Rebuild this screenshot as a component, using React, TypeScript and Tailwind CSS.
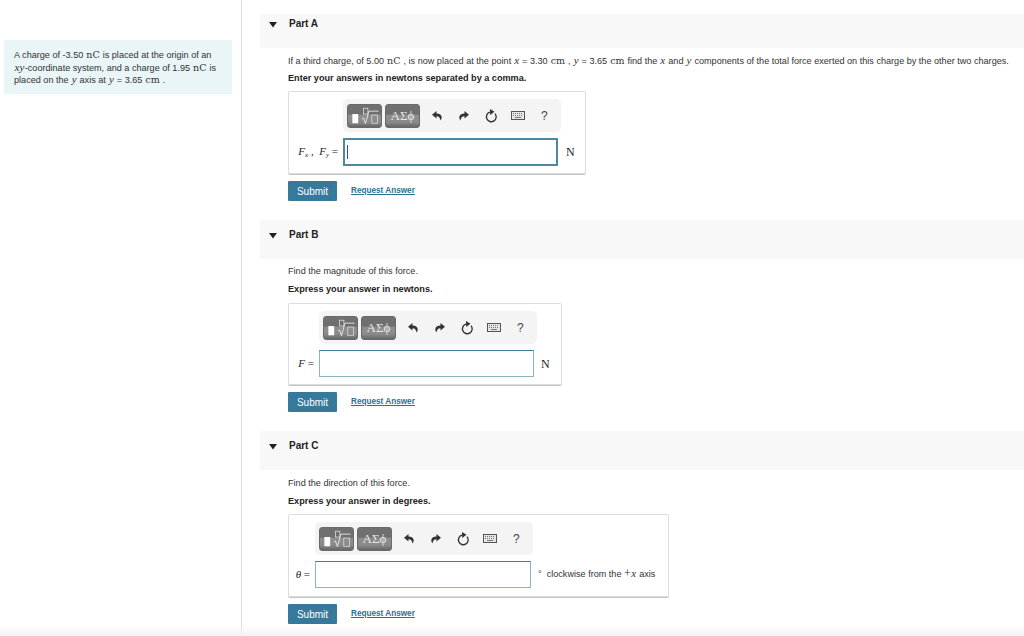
import type { ReactNode } from "react";

const serif = "font-['Liberation_Serif',serif]";
const mathFont = "font-['DejaVu_Serif',serif]";

function M({ children }: { children: ReactNode }) {
  return <span className={`${serif} italic text-[11px] px-[0.5px]`}>{children}</span>;
}

function U({ children }: { children: ReactNode }) {
  return <span className={`${mathFont} text-[9.500px] px-[0.5px]`}>{children}</span>;
}

function TemplateIcon() {
  return (
    <svg width="34" height="22" viewBox="0 0 34 22" fill="none">
      <rect x="4.500" y="9" width="6" height="9.500" fill="#fff" />
      <rect x="16" y="3" width="4.500" height="6" stroke="#ddd" strokeWidth="0.8" />
      <path d="M14.500 14l1.500-1 2 6 3.500-13h10" stroke="#eee" strokeWidth="0.9" />
      <rect x="24.500" y="10" width="6" height="8.500" stroke="#ddd" strokeWidth="0.8" />
    </svg>
  );
}

function Toolbar() {
  const btn =
    "flex h-[24px] w-[35px] items-center justify-center rounded-[3px] border border-[#6a6a6a] bg-[linear-gradient(#707070_0%,#6f6f6f_42%,#8e8e8e_46%,#8a8a8a_78%,#666_100%)]";
  return (
    <div className="flex h-[33px] w-[218px] items-center rounded-[5px] bg-[#f4f4f4] pl-[4px] text-[#333]">
      <div className={btn}>
        <TemplateIcon />
      </div>
      <div className={`${btn} ml-[3px] ${serif} text-[13px] text-[#e8e8e8]`}>ΑΣϕ</div>
      <svg className="ml-[11px]" width="12" height="12" viewBox="0 0 12 12" fill="#333">
        <path d="M5.500 1L1 4.800l4.500 3.800V6.200c2 0 3.400.8 4 4.300 1-1.200 1.400-2.800 1.100-4-.4-2-2.500-3-5.100-3z" />
      </svg>
      <svg className="ml-[15px]" width="12" height="12" viewBox="0 0 12 12" fill="#333">
        <path d="M6.500 1L11 4.800 6.500 8.600V6.200c-2 0-3.400.8-4 4.300-1-1.200-1.400-2.800-1.100-4 .4-2 2.500-3 5.100-3z" />
      </svg>
      <svg className="ml-[15px]" width="13" height="14" viewBox="0 0 13 14" fill="none">
        <path d="M10 4.600A4.900 4.900 0 1 1 5 3.100" stroke="#333" strokeWidth="1.400" />
        <path d="M5 0l4.500 2.800L5.200 6z" fill="#333" />
      </svg>
      <svg className="ml-[13px]" width="14" height="9" viewBox="0 0 14 9" fill="none">
        <rect x="0.500" y="0.500" width="13" height="8" fill="#e6e6e6" stroke="#555" />
        <path d="M2 2.500h10M2 4.500h10" stroke="#777" strokeDasharray="1 1" />
        <path d="M4 6.500h6" stroke="#777" />
      </svg>
      <span className="ml-[16px] text-[12px] text-[#444]">?</span>
    </div>
  );
}

type PartProps = {
  name: string;
  headerH: string;
  headerPt: string;
  text: ReactNode;
  bold: string;
  boxW: string;
  boxH: string;
  labelW: string;
  label: ReactNode;
  inputW: string;
  active?: boolean;
  unit: ReactNode;
  gap: string;
};

function Part({ name, headerH, headerPt, text, bold, boxW, boxH, labelW, label, inputW, active, unit, gap }: PartProps) {
  return (
    <section>
      <div className={`flex ${headerH} ${headerPt} bg-[#f8f8f8]`}>
        <svg className="ml-[9px] mt-[4px]" width="8" height="6" viewBox="0 0 8 6" fill="#222">
          <path d="M0 0h8L4 5.500z" />
        </svg>
        <h2 className="ml-[12px] text-[10px] font-bold leading-[11px] text-[#222]">{name}</h2>
      </div>
      <div className={`pl-[28px] ${gap}`}>
        <p className="h-[18px] whitespace-nowrap text-[9.100px] leading-[14px] text-[#333]">{text}</p>
        <p className="text-[9.150px] font-bold leading-[14px] text-[#222]">{bold}</p>
        <div className={`flex ${boxH} ${boxW} rounded-[2px] border border-[#dcdcdc] shadow-[0_1px_0_#c4c4c4]`}>
          <div className={`${labelW} shrink-0 whitespace-nowrap pr-[5px] pt-[51px] text-right ${serif} text-[11px] italic text-[#222]`}>
            {label}
          </div>
          <div className="pt-[7px]">
            <Toolbar />
            <div
              className={`mt-[6px] flex ${inputW} items-center bg-white ${
                active ? "h-[28px] border-2 border-[#4f88a3]" : "h-[27px] border border-[#8fb3c4] border-t-[#3b7a99]"
              }`}
            >
              {active && <span className="ml-[2px] h-[14px] w-px bg-[#2b50c8]" />}
            </div>
          </div>
          {unit}
        </div>
        <div className="mt-[7px] flex items-center">
          <button className="h-[20px] w-[49px] rounded-[1px] bg-[#36799b] text-[10px] text-white">Submit</button>
          <a className="ml-[14px] text-[8.200px] font-bold text-[#2c7193] underline">Request Answer</a>
        </div>
      </div>
    </section>
  );
}

export default function App() {
  return (
    <div className="relative flex h-[636px] w-[1024px] overflow-hidden bg-white font-['Liberation_Sans',sans-serif]">
      <aside className="h-full w-[242px] shrink-0 border-r border-[#dcdcdc] pl-[4px] pt-[40px]">
        <div className="h-[54px] w-[228px] bg-[#e9f5f7] px-[10px] pt-[9px] text-[9.100px] leading-[11.500px] text-[#333]">
          <p className="whitespace-nowrap">
            A charge of -3.50 <U>nC</U> is placed at the origin of an
          </p>
          <p className="whitespace-nowrap">
            <M>xy</M>-coordinate system, and a charge of 1.95 <U>nC</U> is
          </p>
          <p className="whitespace-nowrap">
            placed on the <M>y</M> axis at <M>y</M> = 3.65 <U>cm</U> .
          </p>
        </div>
      </aside>
      <main className="flex-1 pl-[18px] pt-[14px]">
        <Part
          name="Part A"
          headerH="h-[34px]"
          headerPt="pt-[4px]"
          gap="pt-[5px] pb-[19px]"
          text={
            <>
              If a third charge, of 5.00 <U>nC</U> , is now placed at the point <M>x</M> = 3.30 <U>cm</U> , <M>y</M> = 3.65{" "}
              <U>cm</U> find the <M>x</M> and <M>y</M> components of the total force exerted on this charge by the other
              two charges.
            </>
          }
          bold="Enter your answers in newtons separated by a comma."
          boxW="w-[298px]"
          boxH="mt-[6px] h-[83px]"
          labelW="w-[54px]"
          label={
            <>
              F<sub className="text-[7px]">x</sub> ,&nbsp; F<sub className="text-[7px]">y</sub>{" "}
              <span className="not-italic">=</span>
            </>
          }
          inputW="w-[215px]"
          active
          unit={<span className={`ml-[5px] pt-[51px] ${serif} text-[12px] text-[#222]`}>N</span>}
        />
        <Part
          name="Part B"
          headerH="h-[39px]"
          headerPt="pt-[9px]"
          gap="pt-[5px] pb-[19px]"
          text="Find the magnitude of this force."
          bold="Express your answer in newtons."
          boxW="w-[274px]"
          boxH="mt-[7px] h-[82px]"
          labelW="w-[30px]"
          label={
            <>
              F <span className="not-italic">=</span>
            </>
          }
          inputW="w-[215px]"
          unit={<span className={`ml-[4px] pt-[51px] ${serif} text-[12px] text-[#222]`}>N</span>}
        />
        <Part
          name="Part C"
          headerH="h-[39px]"
          headerPt="pt-[9px]"
          gap="pt-[6px]"
          text="Find the direction of this force."
          bold="Express your answer in degrees."
          boxW="w-[381px]"
          boxH="mt-[6px] h-[83px]"
          labelW="w-[26px]"
          label={
            <>
              θ <span className="not-italic">=</span>
            </>
          }
          inputW="w-[216px]"
          unit={
            <span className="ml-[5px] whitespace-nowrap pt-[51px] text-[9.100px] leading-[14px] text-[#333]">
              °&nbsp; clockwise from the <span className={`${serif} text-[12px]`}>+</span>
              <M>x</M> axis
            </span>
          }
        />
      </main>
      <div className="pointer-events-none absolute bottom-0 left-0 h-[12px] w-full bg-gradient-to-b from-transparent to-[#f3f3f3]" />
    </div>
  );
}
